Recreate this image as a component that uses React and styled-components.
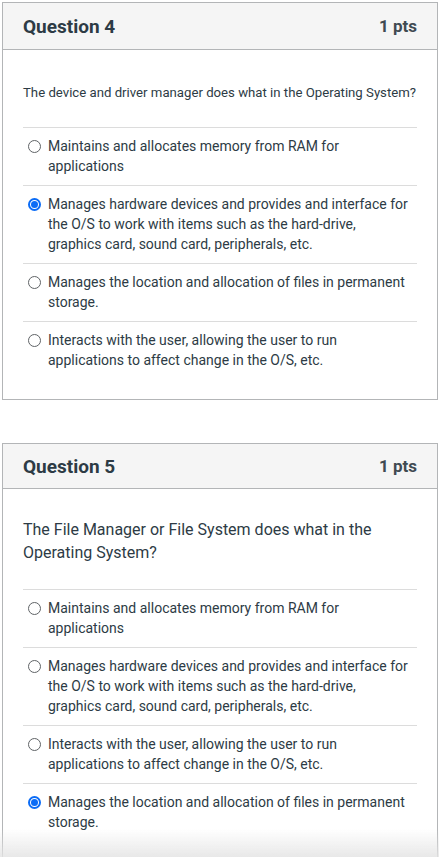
import React from 'react'
import styled, { createGlobalStyle } from 'styled-components'

const GlobalStyle = createGlobalStyle`
    body {
        margin : 0;
        background-color : white;
        font-family : Roboto, "Liberation Sans", Arial, sans-serif;
        color : #2d3b45;
    }
`;

const Page = styled.div`
    display : flex;
    flex-direction : column;
    gap : 43px;
    padding : 2px 1px 40px 2px;
`;

const Card = styled.div`
    border : 1px solid #b3b5b7;
    background-color : white;
`;

const CardHeader = styled.div`
    height : ${({h}) => h}px;
    display : flex;
    align-items : center;
    justify-content : space-between;
    padding : 0 20px;
    background-color : #f5f5f5;
    border-bottom : 1px solid #b3b5b7;
`;

const Title = styled.span`
    font-size : 19px;
    font-weight : 700;
    color : #2d3b45;
`;

const Points = styled.span`
    font-size : 17px;
    font-weight : 700;
    color : #3f4a52;
`;

const CardBody = styled.div`
    padding : ${({top}) => top}px 20px ${({bottom}) => bottom}px;
`;

const QuestionText = styled.p`
    margin : 0 0 ${({gap}) => gap}px;
    font-size : ${({size}) => size}px;
    line-height : ${({lh}) => lh}px;
    color : #2d3b45;
`;

const AnswerList = styled.div`
    display : flex;
    flex-direction : column;
`;

const AnswerRow = styled.label`
    display : flex;
    align-items : flex-start;
    gap : 7px;
    padding : 8px 8px 9px 5px;
    border-top : 1px solid #dcdcdc;
    font-size : 14px;
    line-height : 20px;
    color : #2d3b45;
`;

const Radio = styled.span`
    flex : none;
    box-sizing : border-box;
    width : 13px;
    height : 13px;
    margin-top : 4px;
    border-radius : 50%;
    border : ${({checked}) => checked ? "2px solid #0b6cf6" : "1px solid #5f6366"};
    display : flex;
    align-items : center;
    justify-content : center;

    &::after {
        content : "";
        display : ${({checked}) => checked ? "block" : "none"};
        width : 7px;
        height : 7px;
        border-radius : 50%;
        background-color : #0b6cf6;
    }
`;

const BottomFade = styled.div`
    position : fixed;
    left : 0;
    right : 0;
    bottom : 0;
    height : 28px;
    pointer-events : none;
    background : linear-gradient(to bottom, rgba(255,255,255,0), rgba(228,228,228,0.85));
`;

const questions = [
    {
        id : 4,
        text : "The device and driver manager does what in the Operating System?",
        size : 13.2,
        lh : 18,
        top : 34,
        gap : 25,
        header : 46,
        answers : [
            "Maintains and allocates memory from RAM for applications",
            "Manages hardware devices and provides and interface for the O/S to work with items such as the hard-drive, graphics card, sound card, peripherals, etc.",
            "Manages the location and allocation of files in permanent storage.",
            "Interacts with the user, allowing the user to run applications to affect change in the O/S, etc.",
        ],
        selected : 1,
    },
    {
        id : 5,
        text : "The File Manager or File System does what in the Operating System?",
        size : 16,
        lh : 23,
        top : 29,
        gap : 25,
        header : 44,
        answers : [
            "Maintains and allocates memory from RAM for applications",
            "Manages hardware devices and provides and interface for the O/S to work with items such as the hard-drive, graphics card, sound card, peripherals, etc.",
            "Interacts with the user, allowing the user to run applications to affect change in the O/S, etc.",
            "Manages the location and allocation of files in permanent storage.",
        ],
        selected : 3,
    },
]

const App = () => {
    return(
        <>
        <GlobalStyle/>
        <Page>
            {questions.map((q) => (
                <Card key={q.id}>
                    <CardHeader h={q.header}>
                        <Title>Question {q.id}</Title>
                        <Points>1 pts</Points>
                    </CardHeader>
                    <CardBody top={q.top} bottom={20}>
                        <QuestionText size={q.size} lh={q.lh} gap={q.gap}>{q.text}</QuestionText>
                        <AnswerList>
                            {q.answers.map((a, i) => (
                                <AnswerRow key={i}>
                                    <Radio checked={i === q.selected}/>
                                    <span>{a}</span>
                                </AnswerRow>
                            ))}
                        </AnswerList>
                    </CardBody>
                </Card>
            ))}
        </Page>
        <BottomFade/>
        </>
    )
}

export default App
